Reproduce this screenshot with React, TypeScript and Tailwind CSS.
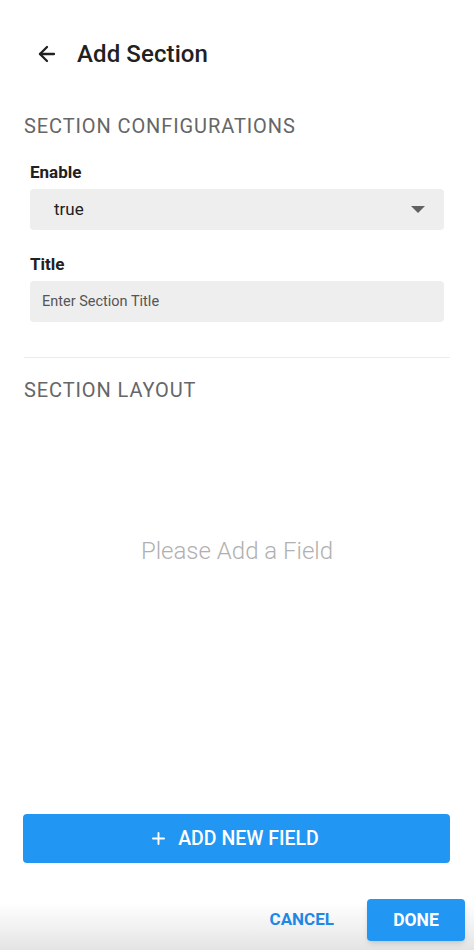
import { ArrowLeft, Plus } from "lucide-react";

export default function App() {
  return (
    <div
      className="flex h-[950px] w-[474px] flex-col bg-white text-[#212121]"
      style={{ fontFamily: "Roboto, 'Liberation Sans', sans-serif" }}
    >
      {/* header */}
      <div className="flex h-[108px] shrink-0 items-center gap-[18px] px-[35px]">
        <ArrowLeft size={24} strokeWidth={2.3} className="text-[#212121]" />
        <h1 className="text-[24px] font-medium tracking-[0.1px]">Add Section</h1>
      </div>

      <div className="flex-1 px-[24px]">
        <h2 className="mt-[6px] text-[20px] leading-[24px] tracking-[0.9px] text-[#666666]">
          SECTION CONFIGURATIONS
        </h2>

        <div className="px-[6px]">
          <label className="mt-[24px] block text-[17px] font-bold leading-[20px]">Enable</label>
          <div className="mt-[7px] flex h-[41px] items-center justify-between rounded bg-[#eeeeee] pl-[24px] pr-[19px]">
            <span className="text-[17px]">true</span>
            <svg width="14" height="7" viewBox="0 0 14 7">
              <path d="M0 0h14L7 7z" fill="#616161" />
            </svg>
          </div>

          <label className="mt-[24px] block text-[17px] font-bold leading-[20px]">Title</label>
          <div className="mt-[7px] flex h-[41px] items-center rounded bg-[#eeeeee] px-[12px]">
            <span className="text-[14.5px] text-[#555555]">Enter Section Title</span>
          </div>
        </div>

        <div className="mt-[35px] h-px bg-[#ebebeb]" />

        <h2 className="mt-[20px] text-[20px] leading-[24px] tracking-[0.9px] text-[#666666]">
          SECTION LAYOUT
        </h2>

        <div className="flex h-[297px] items-center justify-center">
          <span className="text-[24px] font-light text-[#b0b0b0]">Please Add a Field</span>
        </div>

        <button className="mt-[115px] -ml-px flex h-[49px] w-[427px] items-center justify-center gap-[10px] rounded bg-[#2196f3] pr-[5px] text-white">
          <Plus size={19} strokeWidth={2.4} />
          <span className="text-[19.5px] font-medium">ADD NEW FIELD</span>
        </button>
      </div>

      {/* footer */}
      <div className="flex h-[47px] shrink-0 items-start justify-end gap-[33px] bg-gradient-to-b from-white to-[#e4e4e4] pr-[9px]">
        <button className="h-[34px] text-[17px] font-bold text-[#1e88e5]">CANCEL</button>
        <button className="-mt-[4px] h-[42px] w-[98px] rounded bg-[#2196f3] text-[17.5px] font-bold text-white shadow-md">
          DONE
        </button>
      </div>
    </div>
  );
}
